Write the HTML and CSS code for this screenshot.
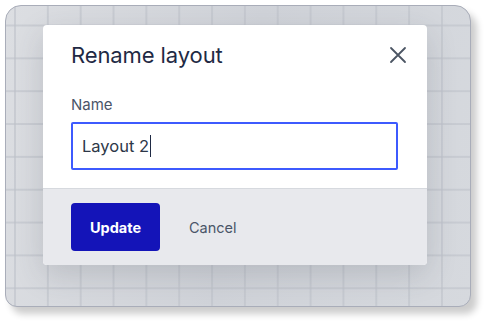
FILE: index.html
```html
<!DOCTYPE html>
<html lang="en">
<head>
    <meta charset="UTF-8">
    <meta name="viewport" content="width=device-width, initial-scale=1.0">
    <title>Rename layout</title>
    <link rel="stylesheet" href="styles.css">
</head>
<body>
    <div class="canvas">
        <div class="modal">
            <div class="modal-body">
                <div class="modal-head">
                    <h2 class="modal-title">Rename layout</h2>
                    <button class="close-btn" aria-label="Close">
                        <svg width="18" height="18" viewBox="0 0 18 18">
                            <path d="M2 2 L16 16 M16 2 L2 16" stroke="#4b5563" stroke-width="1.8" stroke-linecap="round" fill="none"/>
                        </svg>
                    </button>
                </div>
                <label class="field-label" for="name">Name</label>
                <div class="field-input">Layout 2<span class="caret"></span></div>
            </div>
            <div class="modal-footer">
                <button class="update-btn">Update</button>
                <button class="cancel-btn">Cancel</button>
            </div>
        </div>
    </div>
</body>
</html>
```

FILE: styles.css
```css
* {
    margin: 0;
    padding: 0;
    box-sizing: border-box;
}

body {
    font-family: 'Inter', 'Liberation Sans', sans-serif;
    background: #ffffff;
    width: 485px;
    height: 322px;
    overflow: hidden;
}

.canvas {
    margin: 5px 0 0 5px;
    width: 466px;
    height: 302px;
    border: 1px solid #a9adb9;
    border-radius: 16px 16px 12px 12px;
    padding: 19px 0 0 37px;
    background-color: #d4d7dc;
    background-image:
        linear-gradient(to right, rgba(190, 194, 202, 0.6) 2px, transparent 2px),
        linear-gradient(to bottom, rgba(190, 194, 202, 0.6) 2px, transparent 2px),
        linear-gradient(100deg, #dcdee2 0%, #d0d3d9 50%, #d6d9de 100%);
    background-size: 32.85px 32.85px, 32.85px 32.85px, 100% 100%;
    background-position: 8px 18.5px, 8px 18.5px, 0 0;
    box-shadow: 6px 7px 7px rgba(0, 0, 0, 0.2);
}

.modal {
    width: 384px;
    height: 240px;
    background: #ffffff;
    border-radius: 4px;
    overflow: hidden;
    display: flex;
    flex-direction: column;
    box-shadow: 0 10px 30px rgba(60, 66, 80, 0.18);
}

.modal-body {
    padding: 16px 20px 0 28px;
    height: 163px;
}

.modal-head {
    display: flex;
    justify-content: space-between;
    align-items: center;
    height: 28px;
}

.modal-title {
    font-size: 22px;
    font-weight: 400;
    color: #1f2a44;
    letter-spacing: -0.1px;
}

.close-btn {
    background: none;
    border: none;
    width: 18px;
    height: 18px;
    cursor: pointer;
    display: flex;
}

.field-label {
    display: block;
    margin-top: 27px;
    font-size: 15px;
    color: #4a5568;
    line-height: 18px;
}

.field-input {
    margin-top: 8px;
    width: 327px;
    height: 48px;
    border: 2px solid #3d5afe;
    border-radius: 2px;
    padding: 0 9px;
    display: flex;
    align-items: center;
    font-size: 16.5px;
    color: #2d3748;
}

.caret {
    display: inline-block;
    width: 1px;
    height: 22px;
    background: #1f2a44;
    margin-left: 1px;
}

.modal-footer {
    flex: 1;
    background: #e8e9ed;
    border-top: 1px solid #d6d9de;
    display: flex;
    align-items: center;
    padding: 0 28px;
    gap: 29px;
}

.update-btn {
    width: 89px;
    height: 48px;
    background: #1414b8;
    color: #ffffff;
    border: none;
    border-radius: 4px;
    font-family: inherit;
    font-size: 14.5px;
    font-weight: 700;
    cursor: pointer;
}

.cancel-btn {
    background: none;
    border: none;
    font-family: inherit;
    font-size: 14.5px;
    color: #4a5568;
    cursor: pointer;
}
```
